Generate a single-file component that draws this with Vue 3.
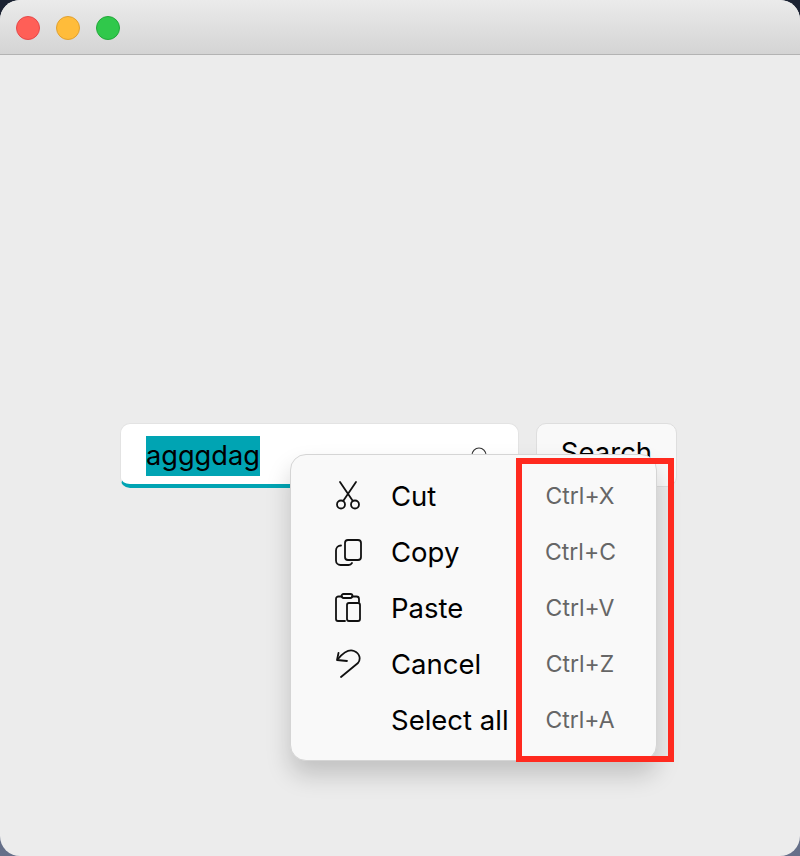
<template>
  <div class="window">
    <!-- Title bar -->
    <div class="titlebar">
      <span class="light red"></span>
      <span class="light yellow"></span>
      <span class="light green"></span>
    </div>

    <div class="content">
      <!-- Search row -->
      <div class="search-row">
        <div class="search-box">
          <span class="selected">agggdag</span>
          <svg class="search-icon" width="20" height="20" viewBox="0 0 20 20" fill="none" stroke="#333" stroke-width="1.2">
            <circle cx="9" cy="9" r="7" />
            <path d="M14 14l4 4" />
          </svg>
        </div>
        <button class="search-btn">Search</button>
      </div>

      <!-- Context menu -->
      <div class="menu">
        <div v-for="item in items" :key="item.label" class="menu-item">
          <div class="item-icon">
            <svg v-if="item.icon" width="28" height="32" viewBox="0 0 28 32" fill="none" stroke="#111" stroke-width="1.8" stroke-linecap="round" stroke-linejoin="round">
              <path v-for="d in item.icon" :key="d" :d="d" />
            </svg>
          </div>
          <span class="item-label">{{ item.label }}</span>
          <span class="item-key">{{ item.shortcut }}</span>
        </div>
      </div>

      <!-- Annotation over the shortcut column -->
      <div class="highlight"></div>
    </div>
  </div>
</template>

<script setup>
const items = [
  {
    label: 'Cut',
    shortcut: 'Ctrl+X',
    icon: [
      'M6 2 L18.5 20.5',
      'M22 2 L9.5 20.5',
      'M11 24.5 a4 4 0 1 1 -8 0 a4 4 0 1 1 8 0 Z',
      'M25 24.5 a4 4 0 1 1 -8 0 a4 4 0 1 1 8 0 Z'
    ]
  },
  {
    label: 'Copy',
    shortcut: 'Ctrl+C',
    icon: [
      'M14 4 h10 a3 3 0 0 1 3 3 v14 a3 3 0 0 1 -3 3 h-10 a3 3 0 0 1 -3 -3 v-14 a3 3 0 0 1 3 -3 Z',
      'M7 9.5 a5 5 0 0 0 -5 5 v10 a4.5 4.5 0 0 0 4.5 4.5 h8 a4 4 0 0 0 3.5 -2'
    ]
  },
  {
    label: 'Paste',
    shortcut: 'Ctrl+V',
    icon: [
      'M8 4.5 h-3.5 a2.5 2.5 0 0 0 -2.5 2.5 v20 a2 2 0 0 0 2 2 h7',
      'M18 4.5 h4.5 a2.5 2.5 0 0 1 2.5 2.5 v3',
      'M9.5 2 h7 a2 2 0 0 1 0 4 h-7 a2 2 0 0 1 0 -4 Z',
      'M15 11 h9 a2 2 0 0 1 2 2 v14 a2 2 0 0 1 -2 2 h-9 a2 2 0 0 1 -2 -2 v-14 a2 2 0 0 1 2 -2 Z'
    ]
  },
  {
    label: 'Cancel',
    shortcut: 'Ctrl+Z',
    icon: [
      'M4 11 C9 5 15 1 20 3 C26 5.5 27 11 24 15 L7 29',
      'M4.5 5 L3 12 L13 13'
    ]
  },
  { label: 'Select all', shortcut: 'Ctrl+A', icon: null }
]
</script>

<style scoped>
.window {
  position: relative;
  display: flex;
  flex-direction: column;
  width: 800px;
  height: 856px;
  overflow: hidden;
  background: #ececec;
  border-radius: 20px;
  font-family: "Inter", "Liberation Sans", sans-serif;
  color: #000;
}

.titlebar {
  display: flex;
  align-items: center;
  gap: 16px;
  flex: none;
  height: 52px;
  padding: 2px 0 0 16px;
  background: linear-gradient(#ebebeb, #d4d4d4);
  border-bottom: 1px solid #b3b3b3;
}

.light {
  width: 24px;
  height: 24px;
  box-sizing: border-box;
  border-radius: 50%;
  border: 1px solid;
}
.red { background: #ff5f57; border-color: #e5484a; }
.yellow { background: #ffbc3a; border-color: #e0a030; }
.green { background: #30c84b; border-color: #22a83a; }

.content {
  position: relative;
  flex: 1;
  padding: 368px 0 0 120px;
}

.search-row {
  display: flex;
  align-items: flex-start;
  gap: 17px;
}

.search-box {
  display: flex;
  align-items: flex-start;
  justify-content: space-between;
  width: 399px;
  height: 65px;
  padding: 12px 28px 0 25px;
  box-sizing: border-box;
  background: #fff;
  border: 1px solid #e3e3e3;
  border-bottom: 4px solid #00a4b3;
  border-radius: 10px;
}

.selected {
  height: 40px;
  background: #00a4b3;
  font-size: 27.2px;
  line-height: 40px;
}

.search-icon {
  margin-top: 10px;
}

.search-btn {
  width: 141px;
  height: 64px;
  padding: 0 0 6px;
  background: #f9f9f9;
  border: 1px solid #dedede;
  border-radius: 10px;
  font-family: inherit;
  font-size: 27.5px;
  color: #000;
}

.menu {
  position: absolute;
  left: 290px;
  top: 399px;
  width: 367px;
  height: 307px;
  padding: 13px 0;
  box-sizing: border-box;
  background: #f9f9f9;
  border: 1px solid #d5d5d5;
  border-radius: 16px;
  box-shadow: 0 14px 24px rgba(0, 0, 0, 0.18);
}

.menu-item {
  display: flex;
  align-items: center;
  height: 56px;
}

.item-icon {
  display: flex;
  justify-content: center;
  width: 28px;
  height: 32px;
  margin-left: 43px;
}

.item-label {
  width: 154px;
  margin-left: 29px;
  font-size: 27.5px;
  white-space: nowrap;
}

.item-key {
  width: 70px;
  font-size: 23px;
  color: #666;
  text-align: center;
  white-space: nowrap;
}

.highlight {
  position: absolute;
  left: 516px;
  top: 403px;
  width: 158px;
  height: 304px;
  box-sizing: border-box;
  border: 6px solid #ff2a1f;
}
</style>

<style>
html, body {
  margin: 0;
  background: linear-gradient(#1b2232 0%, #2a3040 60%, #66708a 100%);
}
</style>
